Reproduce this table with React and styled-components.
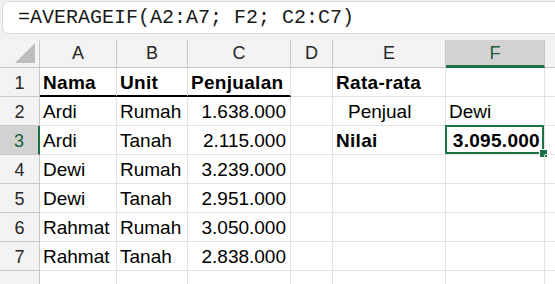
import styled, { createGlobalStyle } from 'styled-components';

const GlobalStyle = createGlobalStyle`
	html, body {
		margin: 0;
		padding: 0;
		background: #ffffff;
		overflow: hidden;
	}
	body {
		font-family: "Liberation Sans", Arial, sans-serif;
	}
`;

const GREEN = '#1e7145';
const COLS = [40, 77, 71, 103, 42, 113, 99, 20];

const Page = styled.div`
	width: 555px;
	height: 284px;
	overflow: hidden;
	background: #f3f3f3;
`;

const FormulaArea = styled.div`
	height: 40px;
	padding: 1px 0 6px 2px;
	box-sizing: border-box;
	background: #f0f0f0;
`;

const FormulaBox = styled.div`
	height: 33px;
	box-sizing: border-box;
	margin-right: -20px;
	background: #ffffff;
	border: 1px solid #d9d9d9;
	border-radius: 7px;
	display: flex;
	align-items: center;
	padding-left: 15px;
	font-family: "Liberation Mono", "Courier New", monospace;
	font-size: 20px;
	color: #1a1a1a;
	white-space: nowrap;
`;

const Grid = styled.div`
	display: grid;
	grid-template-columns: ${COLS.map((c) => `${c}px`).join(' ')};
	grid-template-rows: 28px repeat(8, 29px);
	background: #ffffff;
`;

const Corner = styled.div`
	position: relative;
	background: #f3f3f3;
	border-right: 1px solid #c8c8c8;
	border-bottom: 1px solid #c8c8c8;
	box-sizing: border-box;

	&::after {
		content: '';
		position: absolute;
		right: 4px;
		bottom: 4px;
		width: 0;
		height: 0;
		border-left: 20px solid transparent;
		border-bottom: 20px solid #bdbdbd;
	}
`;

const ColHead = styled.div`
	display: flex;
	align-items: center;
	justify-content: center;
	box-sizing: border-box;
	background: ${(p) => (p.$active ? '#d2d2d2' : '#f3f3f3')};
	border-right: 1px solid #c8c8c8;
	border-bottom: ${(p) => (p.$active ? `3px solid ${GREEN}` : '1px solid #c8c8c8')};
	font-size: 18px;
	color: ${(p) => (p.$active ? '#1b5e38' : '#262626')};
	padding-top: ${(p) => (p.$active ? '2px' : '0')};
`;

const RowHead = styled.div`
	display: flex;
	align-items: center;
	justify-content: center;
	box-sizing: border-box;
	padding-top: 2px;
	background: ${(p) => (p.$active ? '#d2d2d2' : '#f3f3f3')};
	border-right: ${(p) => (p.$active ? `2px solid ${GREEN}` : '1px solid #c8c8c8')};
	border-bottom: 1px solid #c8c8c8;
	font-size: 18px;
	color: ${(p) => (p.$active ? '#1b5e38' : '#262626')};
`;

const Cell = styled.div`
	position: relative;
	display: flex;
	align-items: center;
	justify-content: ${(p) => (p.$right ? 'flex-end' : 'flex-start')};
	box-sizing: border-box;
	padding: ${(p) => (p.$indent ? '2px 4px 0 15px' : '2px 4px 0 3px')};
	border-right: 1px solid #e1e1e1;
	border-bottom: ${(p) => (p.$rule ? '2px solid #000' : '1px solid #e1e1e1')};
	font-size: 19px;
	font-weight: ${(p) => (p.$bold ? 700 : 400)};
	letter-spacing: ${(p) => (p.$bold ? '0.3px' : '0')};
	color: #000;
	white-space: nowrap;
	overflow: visible;
`;

const Selection = styled.div`
	position: absolute;
	left: -1px;
	top: -1px;
	right: 0;
	bottom: 0;
	border: 2px solid ${GREEN};
	pointer-events: none;

	&::after {
		content: '';
		position: absolute;
		right: -6px;
		bottom: -6px;
		width: 7px;
		height: 7px;
		background: ${GREEN};
		border: 1px solid #fff;
	}
`;

const letters = ['A', 'B', 'C', 'D', 'E', 'F', ''];

const data = [
	['Nama', 'Unit', 'Penjualan'],
	['Ardi', 'Rumah', '1.638.000'],
	['Ardi', 'Tanah', '2.115.000'],
	['Dewi', 'Rumah', '3.239.000'],
	['Dewi', 'Tanah', '2.951.000'],
	['Rahmat', 'Rumah', '3.050.000'],
	['Rahmat', 'Tanah', '2.838.000'],
	['', '', ''],
];

const side = {
	0: [{ text: 'Rata-rata', bold: true }, {}],
	1: [{ text: 'Penjual', indent: true }, { text: 'Dewi' }],
	2: [{ text: 'Nilai', bold: true }, { text: '3.095.000', bold: true, right: true, selected: true }],
};

const App = () => {
	return (
		<Page>
			<GlobalStyle />
			<FormulaArea>
				<FormulaBox>=AVERAGEIF(A2:A7; F2; C2:C7)</FormulaBox>
			</FormulaArea>
			<Grid>
				<Corner />
				{letters.map((l, i) => (
					<ColHead key={i} $active={l === 'F'}>{l}</ColHead>
				))}
				{data.map((row, r) => {
					const extra = side[r] || [{}, {}];
					// the 8th row is only a sliver at the bottom edge, its number is not visible
					return [
						<RowHead key={`h${r}`} $active={r === 2}>{r < 7 ? r + 1 : ''}</RowHead>,
						<Cell key={`a${r}`} $bold={r === 0} $rule={r === 0}>{row[0]}</Cell>,
						<Cell key={`b${r}`} $bold={r === 0} $rule={r === 0}>{row[1]}</Cell>,
						<Cell key={`c${r}`} $bold={r === 0} $rule={r === 0} $right={r > 0}>{row[2]}</Cell>,
						<Cell key={`d${r}`} />,
						<Cell key={`e${r}`} $bold={extra[0].bold} $indent={extra[0].indent}>{extra[0].text}</Cell>,
						<Cell key={`f${r}`} $bold={extra[1].bold} $right={extra[1].right}>
							{extra[1].text}
							{extra[1].selected && <Selection />}
						</Cell>,
						<Cell key={`g${r}`} />,
					];
				})}
			</Grid>
		</Page>
	);
};

export default App;
